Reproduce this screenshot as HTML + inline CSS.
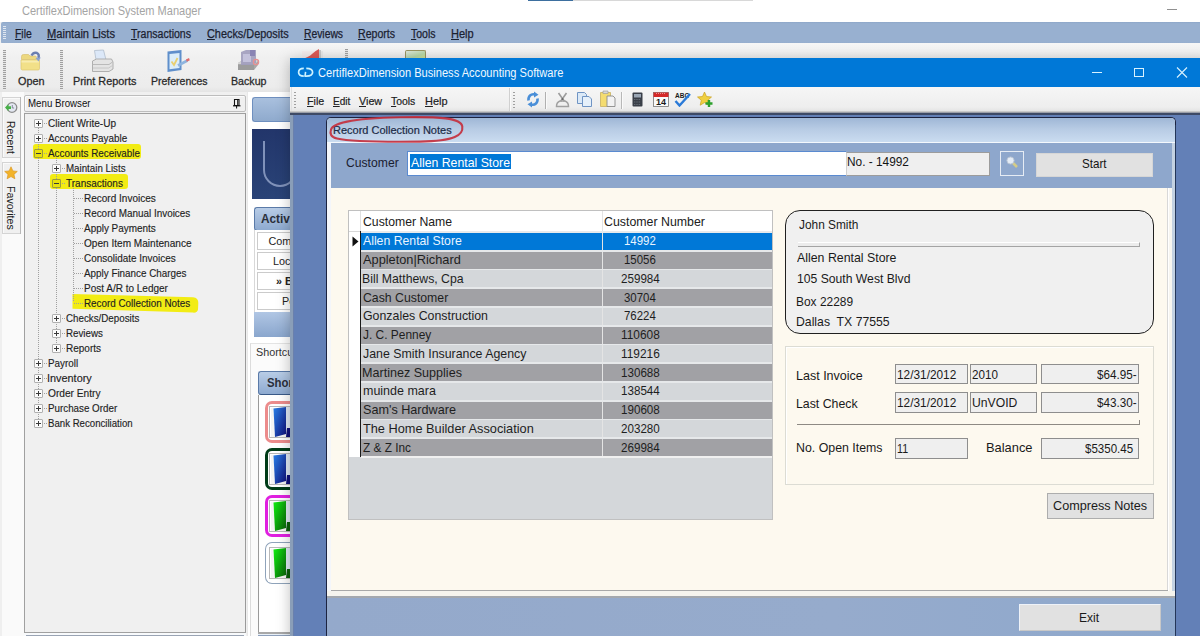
<!DOCTYPE html>
<html><head><meta charset="utf-8">
<style>
*{margin:0;padding:0;box-sizing:border-box}
html,body{width:1200px;height:636px;overflow:hidden;background:#f0f0f0;font-family:"Liberation Sans", sans-serif;position:relative}
.a{position:absolute}
.t{position:absolute;white-space:pre;line-height:1}
u{text-decoration:underline;text-underline-offset:1px;text-decoration-thickness:1px}
</style></head><body>
<div class="a" style="left:0px;top:0px;width:1200px;height:22px;background:#ffffff"></div>
<div class="a" style="left:528px;top:0px;width:45px;height:1px;background:#3d6f9f"></div>
<div class="a" style="left:573px;top:0px;width:180px;height:1px;background:#d8d8d8"></div>
<div class="t" style="left:22.00px;top:5.00px;font-size:12.4px;color:#a4a4a4;transform:scaleX(0.8908);transform-origin:0 0;">CertiflexDimension System Manager</div>
<div class="a" style="left:1167px;top:9px;width:10px;height:1px;background:#909090"></div>
<div class="a" style="left:1px;top:22px;width:1199px;height:21.5px;background:linear-gradient(#8ea7c8,#98b0d0 8%,#98b0d0 92%,#8da5c6);border-radius:2px 0 0 2px"></div>
<div class="a" style="left:3px;top:26px;width:3px;height:14px;background:repeating-linear-gradient(180deg,#dfe7f1 0 1px,transparent 1px 2px)"></div>
<div class="t" style="left:15.00px;top:28.00px;font-size:12px;color:#1b2130;transform:scaleX(0.8646);transform-origin:0 0;-webkit-text-stroke:0.25px #1b2130"><u>F</u>ile</div>
<div class="t" style="left:47.00px;top:28.00px;font-size:12px;color:#1b2130;transform:scaleX(0.9269);transform-origin:0 0;-webkit-text-stroke:0.25px #1b2130"><u>M</u>aintain Lists</div>
<div class="t" style="left:130.80px;top:28.00px;font-size:12px;color:#1b2130;transform:scaleX(0.8791);transform-origin:0 0;-webkit-text-stroke:0.25px #1b2130"><u>T</u>ransactions</div>
<div class="t" style="left:206.70px;top:28.00px;font-size:12px;color:#1b2130;transform:scaleX(0.9063);transform-origin:0 0;-webkit-text-stroke:0.25px #1b2130"><u>C</u>hecks/Deposits</div>
<div class="t" style="left:304.00px;top:28.00px;font-size:12px;color:#1b2130;transform:scaleX(0.8601);transform-origin:0 0;-webkit-text-stroke:0.25px #1b2130"><u>R</u>eviews</div>
<div class="t" style="left:358.00px;top:28.00px;font-size:12px;color:#1b2130;transform:scaleX(0.8806);transform-origin:0 0;-webkit-text-stroke:0.25px #1b2130"><u>R</u>eports</div>
<div class="t" style="left:411.00px;top:28.00px;font-size:12px;color:#1b2130;transform:scaleX(0.8746);transform-origin:0 0;-webkit-text-stroke:0.25px #1b2130"><u>T</u>ools</div>
<div class="t" style="left:451.00px;top:28.00px;font-size:12px;color:#1b2130;transform:scaleX(0.9198);transform-origin:0 0;-webkit-text-stroke:0.25px #1b2130"><u>H</u>elp</div>
<div class="a" style="left:0px;top:43px;width:1200px;height:49px;background:linear-gradient(#f6f6f6,#f0f0f0 30%,#ececec 90%,#e4e4e4)"></div>
<div class="a" style="left:3px;top:50px;width:3px;height:39px;background:repeating-linear-gradient(180deg,#a0a0a0 0 1px,#e8e8e8 1px 2px)"></div>
<div class="a" style="left:60px;top:50px;width:3px;height:39px;background:repeating-linear-gradient(180deg,#a0a0a0 0 1px,#e8e8e8 1px 2px)"></div>
<div class="t" style="left:18.40px;top:76.00px;font-size:11.8px;color:#232323;transform:scaleX(0.9188);transform-origin:0 0;-webkit-text-stroke:0.3px #333">Open</div>
<div class="t" style="left:72.50px;top:76.00px;font-size:11.8px;color:#232323;transform:scaleX(0.9211);transform-origin:0 0;-webkit-text-stroke:0.3px #333">Print Reports</div>
<div class="t" style="left:150.50px;top:76.00px;font-size:11.8px;color:#232323;transform:scaleX(0.8900);transform-origin:0 0;-webkit-text-stroke:0.3px #333">Preferences</div>
<div class="t" style="left:230.80px;top:76.00px;font-size:11.8px;color:#232323;transform:scaleX(0.9023);transform-origin:0 0;-webkit-text-stroke:0.3px #333">Backup</div>
<svg class="a" style="left:20px;top:50px" width="22" height="22" viewBox="0 0 22 22">
<path d="M1.5 6.5q0-2 2-2h5l1.5 1.5h5q1.5 0 1.5 1.5v2H1.5z" fill="#ecd880" stroke="#d8c070" stroke-width=".7"/>
<path d="M1 10h18.5v8.5q0 1.5-1.5 1.5H2.5Q1 20 1 18.5z" fill="#f2e088" stroke="#dcc670" stroke-width=".7"/>
<path d="M1.5 10.5h17.5v2H1.5z" fill="#f8ecb0"/>
<path d="M11.5 5.5q2-3.5 5.5-2.5q2.5 1 1.5 5" stroke="#6a7eb0" stroke-width="2.4" fill="none"/>
<path d="M15.5 8l3 3.5 2.3-4z" fill="#8ea4d0"/>
</svg>
<svg class="a" style="left:91px;top:49px" width="23" height="24" viewBox="0 0 23 24">
<path d="M3.5 1.5l9-.5 2.5 10H5z" fill="#dce8f8" stroke="#b0bccc" stroke-width=".8"/>
<path d="M1.5 12l4-2h15l1.5 3v7l-4 2.5H1.5z" fill="#e4e4e4" stroke="#a8a8a8" stroke-width=".9"/>
<path d="M1.5 15.5h16.5l3.5-2.5" stroke="#b4b4b4" stroke-width=".9" fill="none"/>
<path d="M2 19h15.5l4-2.5" stroke="#c4c4c4" stroke-width=".9" fill="none"/>
</svg>
<svg class="a" style="left:166px;top:49px" width="25" height="25" viewBox="0 0 25 25">
<path d="M1.5 2.5l14-1.5v20l-14 2z" fill="#5f8fcb"/>
<path d="M3.5 5l10-1v15l-10 1.2z" fill="#dbeefa"/>
<path d="M5.5 12.5l2.5 3.5 3.5-7" stroke="#e8cf70" stroke-width="1.8" fill="none"/>
<path d="M12 16.5l9.5-5" stroke="#8fb4de" stroke-width="2.6"/>
<path d="M20 10.5l3-1.5.8 2.2-3 1.5z" fill="#e06a6a"/>
</svg>
<svg class="a" style="left:236px;top:49px" width="25" height="23" viewBox="0 0 25 23">
<path d="M2 14l5-3h16l-1 5-4 5H2z" fill="#a8a8a8"/>
<path d="M2 14l5-3h16l-4 4H2z" fill="#d4d4d4"/>
<path d="M2 16h16v5H2z" fill="#9c9c9c"/>
<path d="M5 3l5-2h10v13l-4 2H5z" fill="#a09cbc" opacity=".9"/>
<path d="M7 5h8v8H7z" fill="#c4c2dc"/>
<path d="M14 1h5v6h-5z" fill="#8a84b4"/>
<circle cx="20" cy="13" r="2.6" fill="none" stroke="#e89090" stroke-width="1.3"/>
</svg>
<svg class="a" style="left:301px;top:48px" width="24" height="11" viewBox="0 0 24 11">
<path d="M1 3h17v8H1z" fill="#f4ecec"/>
<path d="M1 11Q8 9 11 6T18 1v10z" fill="#dc5a55"/>
<path d="M18 2h2v9h-2z" fill="#c8c8c8"/><path d="M20 3h2v8h-2z" fill="#e8e8e8"/>
</svg>
<div class="a" style="left:345px;top:49px;width:3px;height:10px;background:repeating-linear-gradient(180deg,#a0a0a0 0 1px,#e8e8e8 1px 2px)"></div>
<div class="a" style="left:405px;top:50px;width:21px;height:9px;background:linear-gradient(160deg,#dde6dc,#b8d8a8 60%,#d8e890);border:1.5px solid #9a9460;border-bottom:none;border-radius:2px 2px 0 0"></div>
<div class="a" style="left:0px;top:92px;width:247px;height:544px;background:#f0f0f0"></div>
<div class="a" style="left:0px;top:92px;width:2px;height:544px;background:#efefef"></div>
<div class="a" style="left:2px;top:92px;width:22px;height:544px;background:#fafafa"></div>
<div class="a" style="left:2px;top:97px;width:19px;height:61px;background:#f0f0f0;border:1px solid #d4d4d4;border-right:none;box-shadow:inset 1px 1px #fafafa"></div>
<div class="a" style="left:2px;top:162px;width:19px;height:72px;background:#f0f0f0;border:1px solid #d4d4d4;border-right:none;box-shadow:inset 1px 1px #fafafa"></div>
<div class="a" style="left:20px;top:97px;width:1px;height:137px;background:#b8b8b8"></div>
<svg class="a" style="left:3px;top:100px" width="16" height="15" viewBox="3 100 16 15">
<circle cx="12" cy="107.5" r="4.8" fill="#e4e8f2" stroke="#8c8c8c" stroke-width="1.3"/>
<path d="M12.3 105v3h1.8" stroke="#7a8090" stroke-width=".9" fill="none"/>
<path d="M5 107.5l3.5-3.5v2.2h2.5v2.8H8.5v2.2z" fill="#48b048"/>
</svg>
<div class="t" style="left:15.5px;top:121px;font-size:11.2px;color:#1a1a1a;transform-origin:0 0;transform:rotate(90deg) scaleX(0.93)">Recent</div>
<svg class="a" style="left:4px;top:166px" width="14" height="14" viewBox="0 0 14 14">
<path d="M7 .8l1.9 4.1 4.4.5-3.3 3 .9 4.4L7 10.6l-3.9 2.2.9-4.4-3.3-3 4.4-.5z" fill="#f2b32a" stroke="#d89018" stroke-width=".6"/>
</svg>
<div class="t" style="left:15.5px;top:186px;font-size:11.2px;color:#1a1a1a;transform-origin:0 0;transform:rotate(90deg) scaleX(0.95)">Favorites</div>
<div class="a" style="left:24px;top:95px;width:222px;height:17px;background:#f0f0f0;border:1px solid #bdbdbd;border-radius:2px;box-shadow:inset 1px 1px #fbfbfb"></div>
<div class="t" style="left:27.70px;top:98.00px;font-size:10.6px;color:#111;transform:scaleX(0.9161);transform-origin:0 0;">Menu Browser</div>
<svg class="a" style="left:232px;top:98px" width="10" height="11" viewBox="232 98 10 11">
<path d="M234.5 99.5h4.5v6h-4.5z" fill="#f4f4f4" stroke="#111" stroke-width="1.1"/>
<path d="M237.7 99.5v6" stroke="#111" stroke-width="1"/>
<path d="M233 105.8h7.5" stroke="#111" stroke-width="1.2"/>
<path d="M236.6 106v2.5" stroke="#111" stroke-width="1"/>
</svg>
<div class="a" style="left:24px;top:113px;width:222px;height:523px;background:#f0f0f0;border:1px solid #a0a0a0;border-right:1.5px solid #9a9a9a;border-bottom:none"></div>
<div class="a" style="left:24px;top:632px;width:222px;height:1px;background:#a0a0a0"></div>
<div class="a" style="left:24px;top:633px;width:222px;height:3px;background:#f8fafc"></div>
<div class="a" style="left:26px;top:635px;width:218px;height:1px;background:#9aa4b4"></div>
<div class="a" style="left:32.5px;top:143.5px;width:108.5px;height:15px;background:#f2ec14;border-radius:3px"></div>
<div class="a" style="left:49.5px;top:174px;width:78.5px;height:15px;background:#f2ec14;border-radius:3px"></div>
<svg class="a" style="left:70px;top:290px" width="132" height="26" viewBox="70 290 132 26"><path d="M72.5 294L193 297.3Q198.5 297.8 198.3 303L198 309.5Q197.5 313 193 312.6L72.5 308.8Z" fill="#f2ec14"/></svg>
<div class="a" style="left:38px;top:128px;width:1px;height:292px;background:repeating-linear-gradient(180deg,#a0a0a0 0 1px,transparent 1px 2px)"></div>
<div class="a" style="left:56px;top:158px;width:1px;height:188px;background:repeating-linear-gradient(180deg,#a0a0a0 0 1px,transparent 1px 2px)"></div>
<div class="a" style="left:73px;top:188px;width:1px;height:114px;background:repeating-linear-gradient(180deg,#a0a0a0 0 1px,transparent 1px 2px)"></div>
<div class="a" style="left:34px;top:119px;width:9px;height:9px;border:1px solid #b0b0b0;background:#fbfbfb;border-radius:1px"></div>
<div class="a" style="left:36px;top:123px;width:5px;height:1px;background:#3a3a3a"></div>
<div class="a" style="left:38px;top:121px;width:1px;height:5px;background:#3a3a3a"></div>
<div class="a" style="left:44px;top:123px;width:4px;height:1px;background:repeating-linear-gradient(90deg,#a0a0a0 0 1px,transparent 1px 2px)"></div>
<div class="t" style="left:48.40px;top:118.00px;font-size:10.9px;color:#1e1e1e;transform:scaleX(0.9243);transform-origin:0 0;-webkit-text-stroke:0.15px #222">Client Write-Up</div>
<div class="a" style="left:34px;top:134px;width:9px;height:9px;border:1px solid #b0b0b0;background:#fbfbfb;border-radius:1px"></div>
<div class="a" style="left:36px;top:138px;width:5px;height:1px;background:#3a3a3a"></div>
<div class="a" style="left:38px;top:136px;width:1px;height:5px;background:#3a3a3a"></div>
<div class="a" style="left:44px;top:138px;width:4px;height:1px;background:repeating-linear-gradient(90deg,#a0a0a0 0 1px,transparent 1px 2px)"></div>
<div class="t" style="left:48.40px;top:133.00px;font-size:10.9px;color:#1e1e1e;transform:scaleX(0.9079);transform-origin:0 0;-webkit-text-stroke:0.15px #222">Accounts Payable</div>
<div class="a" style="left:34px;top:149px;width:9px;height:9px;border:1px solid #9a9a40;background:#e8e20e;border-radius:1px"></div>
<div class="a" style="left:36px;top:153px;width:5px;height:1px;background:#3a3a3a"></div>
<div class="a" style="left:44px;top:153px;width:4px;height:1px;background:repeating-linear-gradient(90deg,#a0a0a0 0 1px,transparent 1px 2px)"></div>
<div class="t" style="left:48.40px;top:148.00px;font-size:10.9px;color:#1e1e1e;transform:scaleX(0.9041);transform-origin:0 0;-webkit-text-stroke:0.15px #222">Accounts Receivable</div>
<div class="a" style="left:52px;top:164px;width:9px;height:9px;border:1px solid #b0b0b0;background:#fbfbfb;border-radius:1px"></div>
<div class="a" style="left:54px;top:168px;width:5px;height:1px;background:#3a3a3a"></div>
<div class="a" style="left:56px;top:166px;width:1px;height:5px;background:#3a3a3a"></div>
<div class="a" style="left:62px;top:168px;width:4px;height:1px;background:repeating-linear-gradient(90deg,#a0a0a0 0 1px,transparent 1px 2px)"></div>
<div class="t" style="left:66.00px;top:163.00px;font-size:10.9px;color:#1e1e1e;transform:scaleX(0.8937);transform-origin:0 0;-webkit-text-stroke:0.15px #222">Maintain Lists</div>
<div class="a" style="left:52px;top:179px;width:9px;height:9px;border:1px solid #9a9a40;background:#e8e20e;border-radius:1px"></div>
<div class="a" style="left:54px;top:183px;width:5px;height:1px;background:#3a3a3a"></div>
<div class="a" style="left:62px;top:183px;width:4px;height:1px;background:repeating-linear-gradient(90deg,#a0a0a0 0 1px,transparent 1px 2px)"></div>
<div class="t" style="left:66.00px;top:178.00px;font-size:10.9px;color:#1e1e1e;transform:scaleX(0.9185);transform-origin:0 0;-webkit-text-stroke:0.15px #222">Transactions</div>
<div class="a" style="left:74px;top:198px;width:9px;height:1px;background:repeating-linear-gradient(90deg,#a0a0a0 0 1px,transparent 1px 2px)"></div>
<div class="t" style="left:84.00px;top:193.00px;font-size:10.9px;color:#1e1e1e;transform:scaleX(0.9194);transform-origin:0 0;-webkit-text-stroke:0.15px #222">Record Invoices</div>
<div class="a" style="left:74px;top:213px;width:9px;height:1px;background:repeating-linear-gradient(90deg,#a0a0a0 0 1px,transparent 1px 2px)"></div>
<div class="t" style="left:84.00px;top:208.00px;font-size:10.9px;color:#1e1e1e;transform:scaleX(0.9098);transform-origin:0 0;-webkit-text-stroke:0.15px #222">Record Manual Invoices</div>
<div class="a" style="left:74px;top:228px;width:9px;height:1px;background:repeating-linear-gradient(90deg,#a0a0a0 0 1px,transparent 1px 2px)"></div>
<div class="t" style="left:84.00px;top:223.00px;font-size:10.9px;color:#1e1e1e;transform:scaleX(0.9124);transform-origin:0 0;-webkit-text-stroke:0.15px #222">Apply Payments</div>
<div class="a" style="left:74px;top:243px;width:9px;height:1px;background:repeating-linear-gradient(90deg,#a0a0a0 0 1px,transparent 1px 2px)"></div>
<div class="t" style="left:84.00px;top:238.00px;font-size:10.9px;color:#1e1e1e;transform:scaleX(0.9253);transform-origin:0 0;-webkit-text-stroke:0.15px #222">Open Item Maintenance</div>
<div class="a" style="left:74px;top:258px;width:9px;height:1px;background:repeating-linear-gradient(90deg,#a0a0a0 0 1px,transparent 1px 2px)"></div>
<div class="t" style="left:84.00px;top:253.00px;font-size:10.9px;color:#1e1e1e;transform:scaleX(0.9134);transform-origin:0 0;-webkit-text-stroke:0.15px #222">Consolidate Invoices</div>
<div class="a" style="left:74px;top:273px;width:9px;height:1px;background:repeating-linear-gradient(90deg,#a0a0a0 0 1px,transparent 1px 2px)"></div>
<div class="t" style="left:84.00px;top:268.00px;font-size:10.9px;color:#1e1e1e;transform:scaleX(0.9046);transform-origin:0 0;-webkit-text-stroke:0.15px #222">Apply Finance Charges</div>
<div class="a" style="left:74px;top:288px;width:9px;height:1px;background:repeating-linear-gradient(90deg,#a0a0a0 0 1px,transparent 1px 2px)"></div>
<div class="t" style="left:84.00px;top:283.00px;font-size:10.9px;color:#1e1e1e;transform:scaleX(0.9178);transform-origin:0 0;-webkit-text-stroke:0.15px #222">Post A/R to Ledger</div>
<div class="a" style="left:74px;top:303px;width:9px;height:1px;background:repeating-linear-gradient(90deg,#a0a0a0 0 1px,transparent 1px 2px)"></div>
<div class="t" style="left:84.00px;top:298.00px;font-size:10.9px;color:#1e1e1e;transform:scaleX(0.9043);transform-origin:0 0;-webkit-text-stroke:0.15px #222">Record Collection Notes</div>
<div class="a" style="left:52px;top:314px;width:9px;height:9px;border:1px solid #b0b0b0;background:#fbfbfb;border-radius:1px"></div>
<div class="a" style="left:54px;top:318px;width:5px;height:1px;background:#3a3a3a"></div>
<div class="a" style="left:56px;top:316px;width:1px;height:5px;background:#3a3a3a"></div>
<div class="a" style="left:62px;top:318px;width:4px;height:1px;background:repeating-linear-gradient(90deg,#a0a0a0 0 1px,transparent 1px 2px)"></div>
<div class="t" style="left:66.00px;top:313.00px;font-size:10.9px;color:#1e1e1e;transform:scaleX(0.8971);transform-origin:0 0;-webkit-text-stroke:0.15px #222">Checks/Deposits</div>
<div class="a" style="left:52px;top:329px;width:9px;height:9px;border:1px solid #b0b0b0;background:#fbfbfb;border-radius:1px"></div>
<div class="a" style="left:54px;top:333px;width:5px;height:1px;background:#3a3a3a"></div>
<div class="a" style="left:56px;top:331px;width:1px;height:5px;background:#3a3a3a"></div>
<div class="a" style="left:62px;top:333px;width:4px;height:1px;background:repeating-linear-gradient(90deg,#a0a0a0 0 1px,transparent 1px 2px)"></div>
<div class="t" style="left:66.00px;top:328.00px;font-size:10.9px;color:#1e1e1e;transform:scaleX(0.8943);transform-origin:0 0;-webkit-text-stroke:0.15px #222">Reviews</div>
<div class="a" style="left:52px;top:344px;width:9px;height:9px;border:1px solid #b0b0b0;background:#fbfbfb;border-radius:1px"></div>
<div class="a" style="left:54px;top:348px;width:5px;height:1px;background:#3a3a3a"></div>
<div class="a" style="left:56px;top:346px;width:1px;height:5px;background:#3a3a3a"></div>
<div class="a" style="left:62px;top:348px;width:4px;height:1px;background:repeating-linear-gradient(90deg,#a0a0a0 0 1px,transparent 1px 2px)"></div>
<div class="t" style="left:66.00px;top:343.00px;font-size:10.9px;color:#1e1e1e;transform:scaleX(0.9176);transform-origin:0 0;-webkit-text-stroke:0.15px #222">Reports</div>
<div class="a" style="left:34px;top:359px;width:9px;height:9px;border:1px solid #b0b0b0;background:#fbfbfb;border-radius:1px"></div>
<div class="a" style="left:36px;top:363px;width:5px;height:1px;background:#3a3a3a"></div>
<div class="a" style="left:38px;top:361px;width:1px;height:5px;background:#3a3a3a"></div>
<div class="a" style="left:44px;top:363px;width:4px;height:1px;background:repeating-linear-gradient(90deg,#a0a0a0 0 1px,transparent 1px 2px)"></div>
<div class="t" style="left:48.40px;top:358.00px;font-size:10.9px;color:#1e1e1e;transform:scaleX(0.9036);transform-origin:0 0;-webkit-text-stroke:0.15px #222">Payroll</div>
<div class="a" style="left:34px;top:374px;width:9px;height:9px;border:1px solid #b0b0b0;background:#fbfbfb;border-radius:1px"></div>
<div class="a" style="left:36px;top:378px;width:5px;height:1px;background:#3a3a3a"></div>
<div class="a" style="left:38px;top:376px;width:1px;height:5px;background:#3a3a3a"></div>
<div class="a" style="left:44px;top:378px;width:4px;height:1px;background:repeating-linear-gradient(90deg,#a0a0a0 0 1px,transparent 1px 2px)"></div>
<div class="t" style="left:47.40px;top:373.00px;font-size:10.9px;color:#1e1e1e;transform:scaleX(0.9989);transform-origin:0 0;-webkit-text-stroke:0.15px #222">Inventory</div>
<div class="a" style="left:34px;top:389px;width:9px;height:9px;border:1px solid #b0b0b0;background:#fbfbfb;border-radius:1px"></div>
<div class="a" style="left:36px;top:393px;width:5px;height:1px;background:#3a3a3a"></div>
<div class="a" style="left:38px;top:391px;width:1px;height:5px;background:#3a3a3a"></div>
<div class="a" style="left:44px;top:393px;width:4px;height:1px;background:repeating-linear-gradient(90deg,#a0a0a0 0 1px,transparent 1px 2px)"></div>
<div class="t" style="left:48.40px;top:388.00px;font-size:10.9px;color:#1e1e1e;transform:scaleX(0.9342);transform-origin:0 0;-webkit-text-stroke:0.15px #222">Order Entry</div>
<div class="a" style="left:34px;top:404px;width:9px;height:9px;border:1px solid #b0b0b0;background:#fbfbfb;border-radius:1px"></div>
<div class="a" style="left:36px;top:408px;width:5px;height:1px;background:#3a3a3a"></div>
<div class="a" style="left:38px;top:406px;width:1px;height:5px;background:#3a3a3a"></div>
<div class="a" style="left:44px;top:408px;width:4px;height:1px;background:repeating-linear-gradient(90deg,#a0a0a0 0 1px,transparent 1px 2px)"></div>
<div class="t" style="left:48.40px;top:403.00px;font-size:10.9px;color:#1e1e1e;transform:scaleX(0.8997);transform-origin:0 0;-webkit-text-stroke:0.15px #222">Purchase Order</div>
<div class="a" style="left:34px;top:419px;width:9px;height:9px;border:1px solid #b0b0b0;background:#fbfbfb;border-radius:1px"></div>
<div class="a" style="left:36px;top:423px;width:5px;height:1px;background:#3a3a3a"></div>
<div class="a" style="left:38px;top:421px;width:1px;height:5px;background:#3a3a3a"></div>
<div class="a" style="left:44px;top:423px;width:4px;height:1px;background:repeating-linear-gradient(90deg,#a0a0a0 0 1px,transparent 1px 2px)"></div>
<div class="t" style="left:48.40px;top:418.00px;font-size:10.9px;color:#1e1e1e;transform:scaleX(0.8850);transform-origin:0 0;-webkit-text-stroke:0.15px #222">Bank Reconciliation</div>
<div class="a" style="left:247px;top:92px;width:43px;height:544px;background:#ffffff"></div>
<div class="a" style="left:247px;top:92px;width:1px;height:544px;background:#e8e8e8"></div>
<div class="a" style="left:252px;top:97px;width:38px;height:25px;background:linear-gradient(#a9c0de,#8faacd);border:1px solid #6e8fbf;border-right:none;border-radius:3px 0 0 3px"></div>
<div class="a" style="left:252px;top:128.5px;width:38px;height:70px;background:linear-gradient(170deg,#22356a,#2a4478)"></div>
<div class="a" style="left:262.5px;top:141px;width:34px;height:46px;border:2px solid #8092ba;border-top:none;border-radius:0 0 20px 20px"></div>
<div class="a" style="left:254px;top:206.5px;width:36px;height:24.5px;background:linear-gradient(#b8cce6,#8eaad0);border:1px solid #5a7aa8;border-bottom:1.5px solid #3a5a88;border-right:none;border-radius:3px 0 0 3px"></div>
<div class="t" style="left:261.00px;top:213.00px;font-size:12.5px;color:#2a2f3a;font-weight:700;transform:scaleX(0.9450);transform-origin:0 0;">Active</div>
<div class="a" style="left:254px;top:230px;width:36px;height:82px;background:#ffffff;border-left:1px solid #d8d8d8"></div>
<div class="a" style="left:254px;top:312px;width:36px;height:25px;background:linear-gradient(#b0c6e4,#8aa6cd)"></div>
<div class="a" style="left:257px;top:232px;width:33px;height:18px;background:#fff;border:1px solid #cbcbcb;border-right:none"></div>
<div class="t" style="left:268.50px;top:236.00px;font-size:10.8px;color:#222;">Comp</div>
<div class="a" style="left:257px;top:252px;width:33px;height:18px;background:#fff;border:1px solid #cbcbcb;border-right:none"></div>
<div class="t" style="left:273.00px;top:256.00px;font-size:10.8px;color:#222;">Loca</div>
<div class="a" style="left:257px;top:272px;width:33px;height:18px;background:#fff;border:1px solid #cbcbcb;border-right:none"></div>
<div class="t" style="left:276.00px;top:276.00px;font-size:10.8px;color:#222;font-weight:700;">» B</div>
<div class="a" style="left:257px;top:292px;width:33px;height:18px;background:#fff;border:1px solid #cbcbcb;border-right:none"></div>
<div class="t" style="left:282.00px;top:296.00px;font-size:10.8px;color:#222;">Pe</div>
<div class="a" style="left:250px;top:343px;width:40px;height:293px;background:#fbfbfb;border-left:1px solid #dcdcdc;border-top:1px solid #e4e4e4"></div>
<div class="t" style="left:256.00px;top:347.00px;font-size:10.8px;color:#333;">Shortcu</div>
<div class="a" style="left:258px;top:370.5px;width:32px;height:24.5px;background:linear-gradient(#b8cce6,#8eaad0);border:1px solid #5a7aa8;border-bottom:1.5px solid #3a5a88;border-right:none;border-radius:3px 0 0 3px"></div>
<div class="t" style="left:267.00px;top:377.00px;font-size:12.5px;color:#2a2f3a;font-weight:700;transform:scaleX(0.9088);transform-origin:0 0;">Shor</div>
<div class="a" style="left:258px;top:395px;width:1.5px;height:238px;background:#9a9a9a"></div>
<div class="a" style="left:259px;top:395px;width:31px;height:241px;background:#fff"></div>
<div class="a" style="left:264.5px;top:401px;width:26px;height:42px;border:3.5px solid #ec8c8c;border-right:none;border-radius:7px 0 0 7px;background:#fff"></div>
<div class="a" style="left:269px;top:405.5px;width:21px;height:32px;background:#f4f4f4;border:1px solid #b8b8b8;border-right:none;box-shadow:inset 1px 1px #fff"></div>
<svg class="a" style="left:272px;top:406px" width="18" height="32" viewBox="0 0 18 32">
<defs><linearGradient id="g0" x1="0" y1="0" x2="1" y2="1"><stop offset="0" stop-color="#2a80e8"/><stop offset="1" stop-color="#10107a"/></linearGradient></defs>
<path d="M1.5 2.5L14 1v27L3 31z" fill="url(#g0)"/>
<path d="M14 1h4v30h-4z" fill="#dfe8f4"/><path d="M15 22h3v9h-4z" fill="#10107a"/>
</svg>
<div class="a" style="left:264.5px;top:448px;width:26px;height:42px;border:3.5px solid #003c18;border-right:none;border-radius:7px 0 0 7px;background:#fff"></div>
<div class="a" style="left:269px;top:452.5px;width:21px;height:32px;background:#f4f4f4;border:1px solid #b8b8b8;border-right:none;box-shadow:inset 1px 1px #fff"></div>
<svg class="a" style="left:272px;top:453px" width="18" height="32" viewBox="0 0 18 32">
<defs><linearGradient id="g1" x1="0" y1="0" x2="1" y2="1"><stop offset="0" stop-color="#2a80e8"/><stop offset="1" stop-color="#10107a"/></linearGradient></defs>
<path d="M1.5 2.5L14 1v27L3 31z" fill="url(#g1)"/>
<path d="M14 1h4v30h-4z" fill="#dfe8f4"/><path d="M15 22h3v9h-4z" fill="#10107a"/>
</svg>
<div class="a" style="left:264.5px;top:495px;width:26px;height:42px;border:3.5px solid #e020e0;border-right:none;border-radius:7px 0 0 7px;background:#fff"></div>
<div class="a" style="left:269px;top:499.5px;width:21px;height:32px;background:#f4f4f4;border:1px solid #b8b8b8;border-right:none;box-shadow:inset 1px 1px #fff"></div>
<svg class="a" style="left:272px;top:500px" width="18" height="32" viewBox="0 0 18 32">
<defs><linearGradient id="g2" x1="0" y1="0" x2="1" y2="1"><stop offset="0" stop-color="#10f010"/><stop offset="1" stop-color="#0a600a"/></linearGradient></defs>
<path d="M1.5 2.5L14 1v27L3 31z" fill="url(#g2)"/>
<path d="M14 1h4v30h-4z" fill="#dfe8f4"/><path d="M15 22h3v9h-4z" fill="#0a600a"/>
</svg>
<div class="a" style="left:264.5px;top:542px;width:26px;height:42px;border:1px solid #8fa3ba;border-right:none;border-radius:7px 0 0 7px;background:#fff"></div>
<div class="a" style="left:269px;top:546.5px;width:21px;height:32px;background:#f4f4f4;border:1px solid #b8b8b8;border-right:none;box-shadow:inset 1px 1px #fff"></div>
<svg class="a" style="left:272px;top:547px" width="18" height="32" viewBox="0 0 18 32">
<defs><linearGradient id="g3" x1="0" y1="0" x2="1" y2="1"><stop offset="0" stop-color="#10f010"/><stop offset="1" stop-color="#0a600a"/></linearGradient></defs>
<path d="M1.5 2.5L14 1v27L3 31z" fill="url(#g3)"/>
<path d="M14 1h4v30h-4z" fill="#dfe8f4"/><path d="M15 22h3v9h-4z" fill="#0a600a"/>
</svg>
<div class="a" style="left:289.5px;top:92px;width:2px;height:544px;background:#7e92a4"></div>
<div class="a" style="left:258px;top:632px;width:32px;height:1.5px;background:#a8a8a8"></div>
<div class="a" style="left:258px;top:633.5px;width:32px;height:1px;background:#e8f0f8"></div>
<div class="a" style="left:258px;top:634.5px;width:32px;height:1.5px;background:#8ea0bc"></div>
<div class="a" style="left:290px;top:58px;width:920px;height:600px;box-shadow:0 2px 13px rgba(0,0,0,.26);background:#0078d7"></div>
<div class="a" style="left:290px;top:58px;width:910px;height:29px;background:#0078d7"></div>
<svg class="a" style="left:295px;top:64px" width="20" height="16" viewBox="295 64 20 16">
<path d="M303.8 68.3C300.3 68.3 298.6 70.3 298.6 72.3C298.6 74.5 300.6 76.2 303.8 76.2" stroke="#cdf2ff" stroke-width="1.7" fill="none"/>
<path d="M306.3 68.3C310.5 68.3 312.6 70.3 312.6 72.3C312.6 74.5 310.4 76.2 306.2 76.2H304.6" stroke="#cdf2ff" stroke-width="1.7" fill="none"/>
<path d="M305.6 71.8L305 76.6" stroke="#cdf2ff" stroke-width="1.6"/>
</svg>
<div class="t" style="left:318.20px;top:67.00px;font-size:12px;color:#f0f8ff;transform:scaleX(0.9244);transform-origin:0 0;">CertiflexDimension Business Accounting Software</div>
<div class="a" style="left:1092px;top:72px;width:10px;height:1px;background:#d8f2ff"></div>
<div class="a" style="left:1134px;top:68px;width:10px;height:9px;border:1px solid #d8f2ff"></div>
<svg class="a" style="left:1176px;top:67px" width="12" height="11" viewBox="0 0 12 11"><path d="M1 .5l10 10M11 .5l-10 10" stroke="#d8f2ff" stroke-width="1.1"/></svg>
<div class="a" style="left:290px;top:87px;width:910px;height:25px;background:linear-gradient(#f6f6f6,#eeeeee 80%,#e2e2e2)"></div>
<div class="a" style="left:291px;top:87px;width:1px;height:25px;background:#e0e0e0"></div>
<div class="a" style="left:294px;top:92px;width:2px;height:17px;background:repeating-linear-gradient(180deg,#a0a0a0 0 1px,transparent 1px 3px)"></div>
<div class="t" style="left:306.70px;top:95.00px;font-size:11.6px;color:#1a1a1a;transform:scaleX(0.9214);transform-origin:0 0;-webkit-text-stroke:0.2px #222"><u>F</u>ile</div>
<div class="t" style="left:332.50px;top:95.00px;font-size:11.6px;color:#1a1a1a;transform:scaleX(0.8672);transform-origin:0 0;-webkit-text-stroke:0.2px #222"><u>E</u>dit</div>
<div class="t" style="left:359.00px;top:95.00px;font-size:11.6px;color:#1a1a1a;transform:scaleX(0.9277);transform-origin:0 0;-webkit-text-stroke:0.2px #222"><u>V</u>iew</div>
<div class="t" style="left:391.20px;top:95.00px;font-size:11.6px;color:#1a1a1a;transform:scaleX(0.8985);transform-origin:0 0;-webkit-text-stroke:0.2px #222"><u>T</u>ools</div>
<div class="t" style="left:425.10px;top:95.00px;font-size:11.6px;color:#1a1a1a;transform:scaleX(0.9446);transform-origin:0 0;-webkit-text-stroke:0.2px #222"><u>H</u>elp</div>
<div class="a" style="left:509px;top:88px;width:1px;height:24px;background:#d0d0d0"></div>
<div class="a" style="left:510px;top:88px;width:1px;height:24px;background:#fafafa"></div>
<div class="a" style="left:513px;top:92px;width:2px;height:17px;background:repeating-linear-gradient(180deg,#a0a0a0 0 1px,transparent 1px 3px)"></div>
<svg class="a" style="left:524px;top:90px" width="18" height="19" viewBox="524 90 18 19">
<path d="M528.5 100.5C528 96 531 93.5 535 94.5" stroke="#4a8fd8" stroke-width="2.6" fill="none"/>
<path d="M534 91.5l4.5 3.3-4.5 2.8z" fill="#4a8fd8"/>
<path d="M537.5 98.5C538 103 535 105.5 531 104.5" stroke="#4a8fd8" stroke-width="2.6" fill="none"/>
<path d="M532 107.5l-4.5-3.3 4.5-2.8z" fill="#4a8fd8"/>
</svg>
<div class="a" style="left:545px;top:92px;width:2px;height:17px;background:linear-gradient(90deg,#b0b0b0 50%,#fafafa 50%)"></div>
<svg class="a" style="left:555px;top:91px" width="16" height="17" viewBox="555 91 16 17">
<path d="M558.5 93l6 8.5M566.5 93l-6 8.5" stroke="#9c9c9c" stroke-width="1.6"/>
<path d="M556.5 106.5c0-3 2-5 3.5-5.5h5c1.5.5 3.5 2.5 3.5 5.5z" fill="none" stroke="#a0a0a0" stroke-width="1.5"/>
<circle cx="562.5" cy="99" r="1" fill="#666"/>
</svg>
<svg class="a" style="left:576px;top:91px" width="17" height="17" viewBox="576 91 17 17">
<path d="M577.5 92.5h7l2 2v9h-9z" fill="#dbe9f7" stroke="#6f94c4" stroke-width="1"/>
<path d="M582.5 96.5h6.5l2.5 2.5v7.5h-9z" fill="#e6f0fa" stroke="#6f94c4" stroke-width="1"/>
</svg>
<svg class="a" style="left:599px;top:90px" width="18" height="18" viewBox="599 90 18 18">
<path d="M600.5 92.5h10v14h-10z" fill="#f4dc70" stroke="#c8b060" stroke-width=".8"/>
<path d="M603 91h5v2.5h-5z" fill="#d8d8d8" stroke="#999" stroke-width=".6"/>
<path d="M607 96h6l2 2v8.5h-8z" fill="#f2f2f2" stroke="#8a8a8a" stroke-width=".9"/>
</svg>
<div class="a" style="left:621px;top:92px;width:2px;height:17px;background:linear-gradient(90deg,#b8b8b8 50%,#fafafa 50%)"></div>
<svg class="a" style="left:632px;top:92px" width="11" height="15" viewBox="0 0 11 15">
<rect x=".5" y=".5" width="10" height="14" rx="1" fill="#3a3f48"/><rect x="2" y="2" width="7" height="3.5" fill="#9aa6b4"/>
<path d="M2 7.5h7M2 10h7M2 12.5h7" stroke="#6a727c" stroke-width=".9" stroke-dasharray="1.4 .9"/>
</svg>
<svg class="a" style="left:653px;top:91px" width="16" height="16" viewBox="0 0 16 16">
<rect x=".5" y="1.5" width="15" height="14" fill="#fafafa" stroke="#777" stroke-width=".8"/><rect x=".5" y="1.5" width="15" height="4.5" fill="#d42a2a"/>
<text x="8" y="14.3" font-size="9" font-weight="700" text-anchor="middle" fill="#1a1a1a" font-family="Liberation Sans">14</text><path d="M3 2.5h10" stroke="#f4b0b0" stroke-width=".8" stroke-dasharray="1 1"/>
</svg>
<svg class="a" style="left:674px;top:91px" width="17" height="16" viewBox="0 0 17 16">
<text x="1" y="6.5" font-size="6.5" font-weight="700" fill="#1a1a1a" font-family="Liberation Sans">ABC</text>
<path d="M1.5 10l4 4.5L16 3" stroke="#2a7ad8" stroke-width="2.4" fill="none"/>
</svg>
<svg class="a" style="left:697px;top:91px" width="17" height="17" viewBox="0 0 17 17">
<path d="M7.5 1l2 4.5 5 .5-3.8 3.3 1.1 4.9-4.3-2.6-4.3 2.6 1.1-4.9L.5 6l5-.5z" fill="#f0d040" stroke="#c8a020" stroke-width=".7"/>
<path d="M12 9v7M8.5 12.5h7" stroke="#2ca02c" stroke-width="2.4"/>
</svg>
<div class="a" style="left:290px;top:111px;width:910px;height:1px;background:#c8c8c8"></div>
<div class="a" style="left:290px;top:112px;width:910px;height:1px;background:#9a9ea8"></div>
<div class="a" style="left:290px;top:113px;width:910px;height:2px;background:#3e4a66"></div>
<div class="a" style="left:290px;top:115px;width:910px;height:521px;background:#6380b7"></div>
<div class="a" style="left:290px;top:115px;width:2.5px;height:521px;background:#8a9eb8"></div>
<div class="a" style="left:292.5px;top:115px;width:1px;height:521px;background:#6a80ac"></div>
<div class="a" style="left:326px;top:116.5px;width:850px;height:520px;background:#d8dde6;border:1px solid #1c2340;border-bottom:none;border-radius:5px 5px 0 0"></div>
<div class="a" style="left:327px;top:117.5px;width:848px;height:24px;background:linear-gradient(#9fb7d6 0%,#b7cbe4 45%,#cadcf0 100%);border-radius:4px 4px 0 0"></div>
<div class="t" style="left:333.30px;top:125.00px;font-size:10.9px;color:#1c2a46;transform:scaleX(1.0103);transform-origin:0 0;-webkit-text-stroke:0.2px #1c2a46">Record Collection Notes</div>
<div class="a" style="left:327px;top:141.5px;width:848px;height:1.5px;background:#f4f8fc"></div>
<div class="a" style="left:327px;top:143px;width:4px;height:493px;background:#f4f6fa"></div>
<div class="a" style="left:331px;top:143px;width:841px;height:45px;background:#8ea7cc"></div>
<div class="a" style="left:1168px;top:188px;width:4px;height:409px;background:#f8f6f0"></div>
<div class="a" style="left:1172px;top:143px;width:2.5px;height:493px;background:#c4d2e2"></div>
<div class="t" style="left:345.80px;top:157.00px;font-size:12.6px;color:#1a2030;transform:scaleX(0.9652);transform-origin:0 0;">Customer</div>
<div class="a" style="left:407px;top:151px;width:439px;height:25px;background:#ffffff;border:1px solid #5a8ad0;border-right:none"></div>
<div class="a" style="left:410px;top:154px;width:100.5px;height:15px;background:#0078d7"></div>
<div class="t" style="left:410.50px;top:157.00px;font-size:12.6px;color:#ffffff;transform:scaleX(0.9753);transform-origin:0 0;">Allen Rental Store</div>
<div class="a" style="left:846px;top:151.5px;width:144px;height:24.5px;background:#efefef;border:1px solid #9c9c9c;border-left:1px solid #d0d0d0"></div>
<div class="t" style="left:847.43px;top:156.00px;font-size:12.2px;color:#141414;transform:scaleX(0.9728);transform-origin:0 0;">No. - 14992</div>
<div class="a" style="left:1000px;top:151px;width:23.5px;height:24.5px;background:#8ea7cc;border:1px solid #e6ecf4"></div>
<svg class="a" style="left:1004px;top:154px" width="16" height="16" viewBox="0 0 16 16">
<path d="M8.5 8.5l4.5 4.5" stroke="#d4cc88" stroke-width="2.6"/><circle cx="6.5" cy="6.5" r="3.6" fill="#e4ecf6" stroke="#b8c4d4" stroke-width="1"/>
</svg>
<div class="a" style="left:1035.5px;top:152.5px;width:117.5px;height:24px;background:#e1e1e1;border:1px solid #d6d6d6"></div>
<div class="t" style="left:1082.10px;top:158.00px;font-size:12.6px;color:#141414;transform:scaleX(0.9226);transform-origin:0 0;">Start</div>
<div class="a" style="left:331px;top:188px;width:837px;height:402.5px;background:#fdf9ef"></div>
<div class="a" style="left:1166.5px;top:188px;width:1px;height:402.5px;background:#d8d8d8"></div>
<div class="a" style="left:1167.5px;top:188px;width:1px;height:402.5px;background:#ffffff"></div>
<div class="a" style="left:331px;top:590px;width:837px;height:1px;background:#a8a8a8"></div>
<div class="a" style="left:327px;top:591px;width:848px;height:5px;background:#f6f4ee"></div>
<div class="a" style="left:327px;top:596px;width:848px;height:1.5px;background:#a4a8ae"></div>
<div class="a" style="left:348px;top:210px;width:425px;height:310px;background:#d4d7da;border:1px solid #c0c0c0"></div>
<div class="a" style="left:349px;top:211px;width:423px;height:21px;background:#ffffff"></div>
<div class="a" style="left:349px;top:211px;width:11px;height:246px;background:#ffffff"></div>
<div class="a" style="left:360px;top:231px;width:1px;height:226px;background:#1a1a1a"></div>
<div class="a" style="left:601.5px;top:211px;width:1.5px;height:246px;background:#e4e4e4"></div>
<div class="a" style="left:360px;top:211px;width:1px;height:20px;background:#e0e0e0"></div>
<div class="a" style="left:349px;top:230.5px;width:11px;height:1px;background:#d8d8d8"></div>
<div class="t" style="left:363.30px;top:216.00px;font-size:12.2px;color:#202020;transform:scaleX(1.0040);transform-origin:0 0;">Customer Name</div>
<div class="t" style="left:603.90px;top:216.00px;font-size:12.2px;color:#202020;transform:scaleX(1.0141);transform-origin:0 0;">Customer Number</div>
<div class="a" style="left:361px;top:231px;width:411px;height:1.5px;background:#e8eaec"></div>
<svg class="a" style="left:352px;top:236px" width="7" height="11" viewBox="0 0 7 11"><path d="M0.5 0.5L6.5 5.5 0.5 10.5z" fill="#111"/></svg>
<div class="a" style="left:361px;top:232.8px;width:240.5px;height:17px;background:#0078d7"></div>
<div class="a" style="left:603px;top:232.8px;width:169px;height:17px;background:#0078d7"></div>
<div class="a" style="left:361px;top:249.8px;width:411px;height:1.75px;background:#e6e8ea"></div>
<div class="t" style="left:363.30px;top:235.00px;font-size:12.2px;color:#e8f4ff;transform:scaleX(1.0055);transform-origin:0 0;">Allen Rental Store</div>
<div class="t" style="left:624.00px;top:235.00px;font-size:12.2px;color:#e8f4ff;transform:scaleX(0.9381);transform-origin:0 0;">14992</div>
<div class="a" style="left:361px;top:251.55px;width:240.5px;height:17px;background:#a1a1a5"></div>
<div class="a" style="left:603px;top:251.55px;width:169px;height:17px;background:#a1a1a5"></div>
<div class="a" style="left:361px;top:268.55px;width:411px;height:1.75px;background:#e6e8ea"></div>
<div class="t" style="left:363.30px;top:254.00px;font-size:12.2px;color:#1e1e1e;transform:scaleX(1.0487);transform-origin:0 0;">Appleton|Richard</div>
<div class="t" style="left:624.00px;top:254.00px;font-size:12.2px;color:#1e1e1e;transform:scaleX(0.9381);transform-origin:0 0;">15056</div>
<div class="a" style="left:361px;top:270.3px;width:240.5px;height:17px;background:#d4d7da"></div>
<div class="a" style="left:603px;top:270.3px;width:169px;height:17px;background:#d4d7da"></div>
<div class="a" style="left:361px;top:287.3px;width:411px;height:1.75px;background:#e6e8ea"></div>
<div class="t" style="left:362.29px;top:273.00px;font-size:12.2px;color:#1e1e1e;transform:scaleX(1.0066);transform-origin:0 0;">Bill Matthews, Cpa</div>
<div class="t" style="left:620.50px;top:273.00px;font-size:12.2px;color:#1e1e1e;transform:scaleX(0.9538);transform-origin:0 0;">259984</div>
<div class="a" style="left:361px;top:289.05px;width:240.5px;height:17px;background:#a1a1a5"></div>
<div class="a" style="left:603px;top:289.05px;width:169px;height:17px;background:#a1a1a5"></div>
<div class="a" style="left:361px;top:306.05px;width:411px;height:1.75px;background:#e6e8ea"></div>
<div class="t" style="left:363.30px;top:292.00px;font-size:12.2px;color:#1e1e1e;transform:scaleX(1.0070);transform-origin:0 0;">Cash Customer</div>
<div class="t" style="left:624.00px;top:292.00px;font-size:12.2px;color:#1e1e1e;transform:scaleX(0.9381);transform-origin:0 0;">30704</div>
<div class="a" style="left:361px;top:307.8px;width:240.5px;height:17px;background:#d4d7da"></div>
<div class="a" style="left:603px;top:307.8px;width:169px;height:17px;background:#d4d7da"></div>
<div class="a" style="left:361px;top:324.8px;width:411px;height:1.75px;background:#e6e8ea"></div>
<div class="t" style="left:363.30px;top:310.00px;font-size:12.2px;color:#1e1e1e;transform:scaleX(1.0138);transform-origin:0 0;">Gonzales Construction</div>
<div class="t" style="left:624.00px;top:310.00px;font-size:12.2px;color:#1e1e1e;transform:scaleX(0.9381);transform-origin:0 0;">76224</div>
<div class="a" style="left:361px;top:326.55px;width:240.5px;height:17px;background:#a1a1a5"></div>
<div class="a" style="left:603px;top:326.55px;width:169px;height:17px;background:#a1a1a5"></div>
<div class="a" style="left:361px;top:343.55px;width:411px;height:1.75px;background:#e6e8ea"></div>
<div class="t" style="left:363.30px;top:329.00px;font-size:12.2px;color:#1e1e1e;transform:scaleX(0.9790);transform-origin:0 0;">J. C. Penney</div>
<div class="t" style="left:620.50px;top:329.00px;font-size:12.2px;color:#1e1e1e;transform:scaleX(0.9754);transform-origin:0 0;">110608</div>
<div class="a" style="left:361px;top:345.3px;width:240.5px;height:17px;background:#d4d7da"></div>
<div class="a" style="left:603px;top:345.3px;width:169px;height:17px;background:#d4d7da"></div>
<div class="a" style="left:361px;top:362.3px;width:411px;height:1.75px;background:#e6e8ea"></div>
<div class="t" style="left:363.30px;top:348.00px;font-size:12.2px;color:#1e1e1e;transform:scaleX(1.0134);transform-origin:0 0;">Jane Smith Insurance Agency</div>
<div class="t" style="left:620.50px;top:348.00px;font-size:12.2px;color:#1e1e1e;transform:scaleX(0.9754);transform-origin:0 0;">119216</div>
<div class="a" style="left:361px;top:364.05px;width:240.5px;height:17px;background:#a1a1a5"></div>
<div class="a" style="left:603px;top:364.05px;width:169px;height:17px;background:#a1a1a5"></div>
<div class="a" style="left:361px;top:381.05px;width:411px;height:1.75px;background:#e6e8ea"></div>
<div class="t" style="left:362.27px;top:367.00px;font-size:12.2px;color:#1e1e1e;transform:scaleX(1.0316);transform-origin:0 0;">Martinez Supplies</div>
<div class="t" style="left:620.50px;top:367.00px;font-size:12.2px;color:#1e1e1e;transform:scaleX(0.9538);transform-origin:0 0;">130688</div>
<div class="a" style="left:361px;top:382.8px;width:240.5px;height:17px;background:#d4d7da"></div>
<div class="a" style="left:603px;top:382.8px;width:169px;height:17px;background:#d4d7da"></div>
<div class="a" style="left:361px;top:399.8px;width:411px;height:1.75px;background:#e6e8ea"></div>
<div class="t" style="left:363.30px;top:385.00px;font-size:12.2px;color:#1e1e1e;transform:scaleX(1.0246);transform-origin:0 0;">muinde mara</div>
<div class="t" style="left:620.50px;top:385.00px;font-size:12.2px;color:#1e1e1e;transform:scaleX(0.9538);transform-origin:0 0;">138544</div>
<div class="a" style="left:361px;top:401.55px;width:240.5px;height:17px;background:#a1a1a5"></div>
<div class="a" style="left:603px;top:401.55px;width:169px;height:17px;background:#a1a1a5"></div>
<div class="a" style="left:361px;top:418.55px;width:411px;height:1.75px;background:#e6e8ea"></div>
<div class="t" style="left:363.30px;top:404.00px;font-size:12.2px;color:#1e1e1e;transform:scaleX(1.0365);transform-origin:0 0;">Sam's Hardware</div>
<div class="t" style="left:620.50px;top:404.00px;font-size:12.2px;color:#1e1e1e;transform:scaleX(0.9538);transform-origin:0 0;">190608</div>
<div class="a" style="left:361px;top:420.3px;width:240.5px;height:17px;background:#d4d7da"></div>
<div class="a" style="left:603px;top:420.3px;width:169px;height:17px;background:#d4d7da"></div>
<div class="a" style="left:361px;top:437.3px;width:411px;height:1.75px;background:#e6e8ea"></div>
<div class="t" style="left:363.30px;top:423.00px;font-size:12.2px;color:#1e1e1e;transform:scaleX(1.0457);transform-origin:0 0;">The Home Builder Association</div>
<div class="t" style="left:620.50px;top:423.00px;font-size:12.2px;color:#1e1e1e;transform:scaleX(0.9538);transform-origin:0 0;">203280</div>
<div class="a" style="left:361px;top:439.05px;width:240.5px;height:17px;background:#a1a1a5"></div>
<div class="a" style="left:603px;top:439.05px;width:169px;height:17px;background:#a1a1a5"></div>
<div class="a" style="left:361px;top:456.05px;width:411px;height:1.75px;background:#e6e8ea"></div>
<div class="t" style="left:363.30px;top:442.00px;font-size:12.2px;color:#1e1e1e;transform:scaleX(0.9708);transform-origin:0 0;">Z &amp; Z Inc</div>
<div class="t" style="left:620.50px;top:442.00px;font-size:12.2px;color:#1e1e1e;transform:scaleX(0.9538);transform-origin:0 0;">269984</div>
<div class="a" style="left:361px;top:456.3px;width:411px;height:1.5px;background:#f0f0f0"></div>
<div class="a" style="left:785px;top:210px;width:369px;height:123.5px;background:#f0f0f0;border:1.3px solid #202020;border-radius:15px"></div>
<div class="a" style="left:798px;top:242px;width:342px;height:4.8px;border-top:1px solid #ffffff;border-bottom:1.3px solid #a4a4a4;border-right:1px solid #a4a4a4;background:#ececec"></div>
<div class="t" style="left:798.80px;top:219.00px;font-size:12.4px;color:#1a1a1a;transform:scaleX(0.9583);transform-origin:0 0;">John Smith</div>
<div class="t" style="left:797.00px;top:252.00px;font-size:12.4px;color:#1a1a1a;transform:scaleX(0.9962);transform-origin:0 0;">Allen Rental Store</div>
<div class="t" style="left:797.00px;top:273.00px;font-size:12.4px;color:#1a1a1a;transform:scaleX(0.9819);transform-origin:0 0;">105 South West Blvd</div>
<div class="t" style="left:796.04px;top:296.00px;font-size:12.4px;color:#1a1a1a;transform:scaleX(0.9630);transform-origin:0 0;">Box 22289</div>
<div class="t" style="left:796.01px;top:316.00px;font-size:12.4px;color:#1a1a1a;transform:scaleX(0.9877);transform-origin:0 0;">Dallas  TX 77555</div>
<div class="a" style="left:784.5px;top:345.5px;width:369.5px;height:139px;border:1px solid #dcdcd4;box-shadow:inset 1px 1px #ffffff"></div>
<div class="t" style="left:795.97px;top:370.00px;font-size:12.2px;color:#1a1a1a;transform:scaleX(1.0271);transform-origin:0 0;">Last Invoice</div>
<div class="t" style="left:795.99px;top:398.00px;font-size:12.2px;color:#1a1a1a;transform:scaleX(1.0103);transform-origin:0 0;">Last Check</div>
<div class="t" style="left:795.99px;top:442.00px;font-size:12.2px;color:#1a1a1a;transform:scaleX(1.0136);transform-origin:0 0;">No. Open Items</div>
<div class="t" style="left:985.64px;top:442.00px;font-size:12.2px;color:#1a1a1a;transform:scaleX(1.0563);transform-origin:0 0;">Balance</div>
<div class="a" style="left:894.5px;top:364px;width:73px;height:20.3px;background:#efefef;border:1.5px solid #8e8e8e"></div>
<div class="a" style="left:970.2px;top:364px;width:66.5px;height:20.3px;background:#efefef;border:1.5px solid #8e8e8e"></div>
<div class="a" style="left:1040.7px;top:364px;width:98.2px;height:20.3px;background:#efefef;border:1.5px solid #8e8e8e"></div>
<div class="a" style="left:894.5px;top:392.3px;width:73px;height:20.3px;background:#efefef;border:1.5px solid #8e8e8e"></div>
<div class="a" style="left:970.2px;top:392.3px;width:66.5px;height:20.3px;background:#efefef;border:1.5px solid #8e8e8e"></div>
<div class="a" style="left:1040.7px;top:392.3px;width:98.2px;height:20.3px;background:#efefef;border:1.5px solid #8e8e8e"></div>
<div class="a" style="left:894.5px;top:438.3px;width:73px;height:20.3px;background:#efefef;border:1.5px solid #8e8e8e"></div>
<div class="a" style="left:1040.7px;top:438.3px;width:98.2px;height:20.3px;background:#efefef;border:1.5px solid #8e8e8e"></div>
<div class="a" style="left:797px;top:424px;width:343px;height:1.2px;background:#8e8a84"></div>
<div class="a" style="left:1139px;top:420px;width:1.2px;height:5px;background:#8e8a84"></div>
<div class="t" style="left:896.50px;top:369.00px;font-size:12.2px;color:#1a1a1a;transform:scaleX(0.9719);transform-origin:0 0;">12/31/2012</div>
<div class="t" style="left:896.50px;top:397.00px;font-size:12.2px;color:#1a1a1a;transform:scaleX(0.9719);transform-origin:0 0;">12/31/2012</div>
<div class="t" style="left:972.30px;top:369.00px;font-size:12.2px;color:#1a1a1a;transform:scaleX(0.9548);transform-origin:0 0;">2010</div>
<div class="t" style="left:972.30px;top:397.00px;font-size:12.2px;color:#1a1a1a;transform:scaleX(0.9984);transform-origin:0 0;">UnVOID</div>
<div class="t" style="left:1097.30px;top:369.00px;font-size:12.2px;color:#1a1a1a;transform:scaleX(0.9594);transform-origin:0 0;">$64.95-</div>
<div class="t" style="left:1097.30px;top:397.00px;font-size:12.2px;color:#1a1a1a;transform:scaleX(0.9594);transform-origin:0 0;">$43.30-</div>
<div class="t" style="left:896.50px;top:443.00px;font-size:12.2px;color:#1a1a1a;transform:scaleX(0.8778);transform-origin:0 0;">11</div>
<div class="t" style="left:1085.00px;top:443.00px;font-size:12.2px;color:#1a1a1a;transform:scaleX(0.9460);transform-origin:0 0;">$5350.45</div>
<div class="a" style="left:1047px;top:492.8px;width:107px;height:26.5px;background:#e1e1e1;border:1px solid #adadad"></div>
<div class="t" style="left:1053.30px;top:500.00px;font-size:12.4px;color:#1a1a1a;transform:scaleX(1.0209);transform-origin:0 0;">Compress Notes</div>
<div class="a" style="left:327px;top:597.5px;width:848px;height:38.5px;background:linear-gradient(90deg,#94a9cb,#96abcc 60%,#8ea8cc)"></div>
<div class="a" style="left:1018.7px;top:604px;width:142.5px;height:26.5px;background:#e1e1e1;border:1px solid #eef2f8;border-right-color:#c8c8c8;border-bottom-color:#c8c8c8"></div>
<div class="t" style="left:1079.28px;top:612.00px;font-size:12.4px;color:#1a1a1a;transform:scaleX(0.9746);transform-origin:0 0;">Exit</div>
<div class="a" style="left:1176px;top:116px;width:24px;height:520px;background:#6380b7"></div>
<div class="a" style="left:1174.5px;top:125px;width:1.5px;height:511px;background:#243658"></div>
<svg class="a" style="left:320px;top:110px" width="150" height="40" viewBox="320 110 150 40">
<path d="M331 131C330 123 352 118.5 400 117.3C440 116.5 461 118 462.3 126.5C463.5 135 455 141 420 141.6C385 142 350 141.5 337 138.5C331 137 329.5 134 331 129.5" stroke="#c4303e" stroke-width="2.1" fill="none" opacity=".92"/>
</svg>
</body></html>
